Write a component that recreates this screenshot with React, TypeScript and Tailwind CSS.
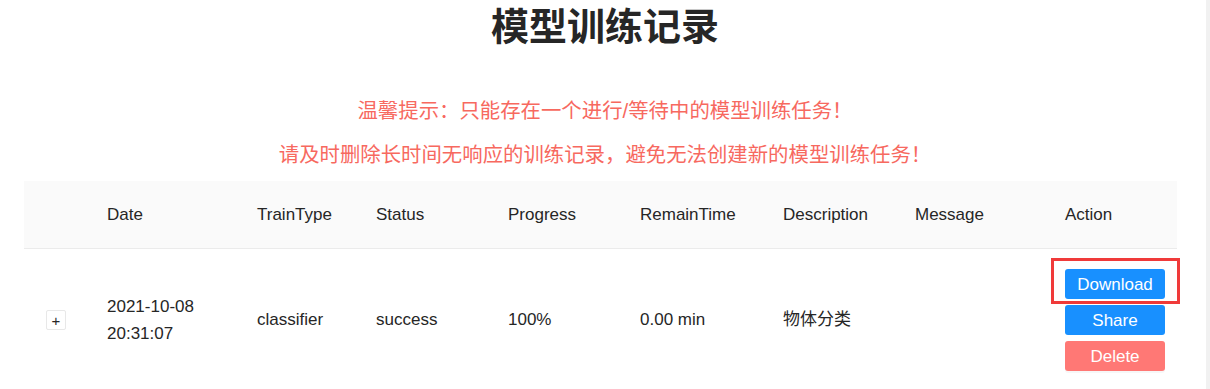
import React from "react";

const cols = [
  { key: "expand", w: "w-[67px]", label: "" },
  { key: "date", w: "w-[150px]", label: "Date" },
  { key: "type", w: "w-[119px]", label: "TrainType" },
  { key: "status", w: "w-[132px]", label: "Status" },
  { key: "progress", w: "w-[132px]", label: "Progress" },
  { key: "remain", w: "w-[143px]", label: "RemainTime" },
  { key: "desc", w: "w-[132px]", label: "Description" },
  { key: "msg", w: "w-[150px]", label: "Message" },
  { key: "action", w: "w-[128px]", label: "Action" },
];

export default function App() {
  const font = { fontFamily: '"Liberation Sans", Arial, "Noto Sans CJK SC", sans-serif' };
  return (
    <div className="relative w-[1210px] h-[389px] overflow-hidden bg-white text-[#262626]" style={font}>
      <div className="absolute right-0 top-0 h-full w-[4px] bg-[#f1f1f1]" />
      <h1 className="pt-[2px] text-center text-[38px] font-bold leading-[50px] text-[#262626]">模型训练记录</h1>
      <div className="mt-[37px] text-center text-[20.4px] leading-[44px] text-[#f7695f]">
        <p>温馨提示：只能存在一个进行/等待中的模型训练任务！</p>
        <p>请及时删除长时间无响应的训练记录，避免无法创建新的模型训练任务！</p>
      </div>
      <div className="mx-[24px] mt-[4px] w-[1153px]">
        <div className="flex h-[68px] items-center border-b border-[#ebebeb] bg-[#fafafa] text-[17px]">
          {cols.map((c) => (
            <div key={c.key} className={`${c.w} pl-[16px]`}>{c.label}</div>
          ))}
        </div>
        <div className="flex items-center py-[20px] text-[17px]">
          <div className="w-[67px] pl-[22px]">
            <div className="flex h-[20px] w-[20px] items-center justify-center rounded-[2px] border border-[#e8e8e8] bg-white text-[15px] leading-none">+</div>
          </div>
          <div className="w-[150px] pl-[16px] leading-[27px]">
            <div>2021-10-08</div>
            <div>20:31:07</div>
          </div>
          <div className="w-[119px] pl-[16px]">classifier</div>
          <div className="w-[132px] pl-[16px]">success</div>
          <div className="w-[132px] pl-[16px]">100%</div>
          <div className="w-[143px] pl-[16px]">0.00 min</div>
          <div className="w-[132px] pl-[16px]">物体分类</div>
          <div className="w-[150px] pl-[16px]"></div>
          <div className="w-[128px] pl-[16px]">
            <div className="relative flex flex-col gap-[6px]">
              <div className="pointer-events-none absolute left-[-14px] top-[-11px] h-[46px] w-[129px] border-[3px] border-[#f03a3a]" />
              <button className="h-[30px] w-[100px] rounded-[3px] bg-[#1890ff] text-[17px] leading-none text-white">Download</button>
              <button className="h-[30px] w-[100px] rounded-[3px] bg-[#1890ff] text-[17px] leading-none text-white">Share</button>
              <button className="h-[30px] w-[100px] rounded-[3px] bg-[#ff7875] text-[17px] leading-none text-white shadow-[0_2px_0_rgba(0,0,0,0.03)]">Delete</button>
            </div>
          </div>
        </div>
      </div>
    </div>
  );
}
